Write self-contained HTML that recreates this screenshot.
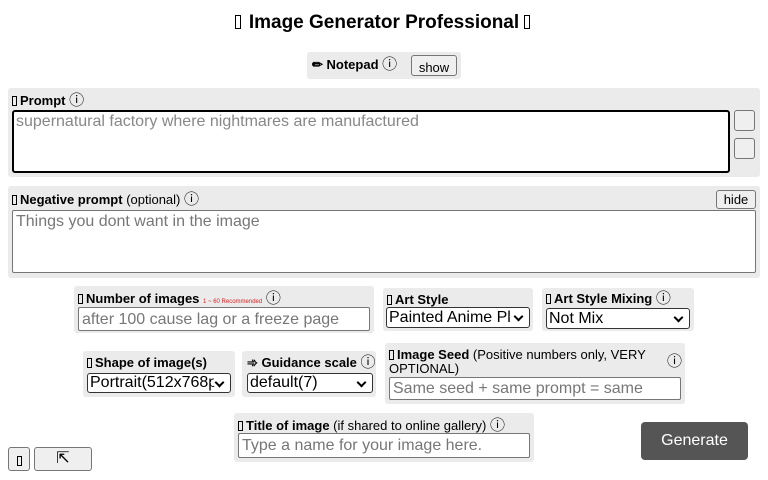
<!DOCTYPE html>
<html><head><meta charset="utf-8"><style>
*{box-sizing:border-box}
body{margin:0;width:768px;height:480px;background:#fff;font-family:"Liberation Sans",sans-serif;font-size:13px;color:#000;position:relative;overflow:hidden}
.a{position:absolute}
.box{position:absolute;background:#ebebeb;border-radius:3px}
.t{display:inline-block;width:5px;height:10px;border:1px solid #000;margin-right:3px;vertical-align:-1px}
.i{font-weight:normal;font-size:15px;font-family:"DejaVu Sans",sans-serif;line-height:10px}
.lbl{position:absolute;font-weight:bold;font-size:13px;white-space:nowrap;line-height:15px}
.lbl span.n{font-weight:normal}
.in{position:absolute;background:#fff;border:1px solid #767676;border-radius:2px;font-size:16px;color:#777;padding:2px 3px;white-space:nowrap;overflow:hidden;line-height:19px}
.sel{position:absolute;background:#fff;border:1px solid #333;border-radius:3px;font-size:16px;color:#000;padding:1px 2px;white-space:nowrap;overflow:hidden;line-height:18px}
.sel:after{content:"";position:absolute;right:7px;top:5px;width:5px;height:5px;border-right:2px solid #000;border-bottom:2px solid #000;transform:rotate(45deg);background:#fff;box-shadow:0 0 0 3px #fff}
.btn{position:absolute;background:#efefef;border:1px solid #767676;border-radius:3px;font-size:13px;text-align:center}
</style></head><body>
<div class="a" style="left:0;width:768px;top:12px;text-align:center;font-size:19px;font-weight:bold"><span class="t" style="width:6px;height:14px"></span> Image Generator Professional <span class="t" style="width:6px;height:14px"></span></div>

<div class="box" style="left:307px;top:52px;width:154px;height:27px"></div>
<div class="lbl" style="left:312px;top:57px">✏ Notepad <span class="i">ⓘ</span></div>
<div class="btn" style="left:411px;top:55px;width:46px;height:21px;line-height:21px;padding-top:1px">show</div>

<div class="box" style="left:8px;top:88px;width:752px;height:89px"></div>
<div class="lbl" style="left:12px;top:93px"><span class="t"></span>Prompt <span class="i">ⓘ</span></div>
<div class="in" style="left:12px;top:110px;width:718px;height:63px;border:2px solid #000;border-radius:3px;color:#888;padding:0 2px">supernatural factory where nightmares are manufactured</div>
<div class="btn" style="left:734px;top:110px;width:21px;height:21px"></div>
<div class="btn" style="left:734px;top:138px;width:21px;height:21px"></div>

<div class="box" style="left:8px;top:186px;width:752px;height:92px"></div>
<div class="lbl" style="left:12px;top:192px"><span class="t"></span>Negative prompt <span class="n">(optional)</span> <span class="i">ⓘ</span></div>
<div class="btn" style="left:716px;top:190px;width:40px;height:19px;line-height:17px">hide</div>
<div class="in" style="left:12px;top:210px;width:744px;height:63px;padding:1px 3px">Things you dont want in the image</div>

<div class="box" style="left:74px;top:286px;width:300px;height:47px"></div>
<div class="lbl" style="left:78px;top:291px"><span class="t"></span>Number of images <span class="n" style="color:#d22;font-size:6px">1 ~ 60 Recommended</span> <span class="i">ⓘ</span></div>
<div class="in" style="left:78px;top:307px;width:292px;height:24px">after 100 cause lag or a freeze page</div>

<div class="box" style="left:383px;top:288px;width:150px;height:43px"></div>
<div class="lbl" style="left:387px;top:292px"><span class="t"></span>Art Style</div>
<div class="sel" style="left:386px;top:307px;width:144px;height:21px">Painted Anime Pl</div>

<div class="box" style="left:542px;top:288px;width:152px;height:43px"></div>
<div class="lbl" style="left:546px;top:291px"><span class="t"></span>Art Style Mixing <span class="i">ⓘ</span></div>
<div class="sel" style="left:546px;top:308px;width:144px;height:21px">Not Mix</div>

<div class="box" style="left:83px;top:351px;width:152px;height:46px"></div>
<div class="lbl" style="left:87px;top:355px"><span class="t"></span>Shape of image(s)</div>
<div class="sel" style="left:87px;top:373px;width:144px;height:20px;padding-top:0">Portrait(512x768p</div>

<div class="box" style="left:242px;top:351px;width:134px;height:46px"></div>
<div class="lbl" style="left:247px;top:355px">➾ Guidance scale <span class="i">ⓘ</span></div>
<div class="sel" style="left:247px;top:373px;width:126px;height:20px;padding-top:0">default(7)</div>

<div class="box" style="left:385px;top:343px;width:300px;height:61px"></div>
<div class="lbl" style="left:389px;top:348px;width:260px;white-space:normal;line-height:14px"><span class="t"></span>Image Seed <span class="n">(Positive numbers only, VERY OPTIONAL)</span></div>
<div class="a i" style="left:667px;top:356px">ⓘ</div>
<div class="in" style="left:389px;top:377px;width:292px;height:23px;padding-top:1px">Same seed + same prompt = same</div>

<div class="box" style="left:234px;top:413px;width:300px;height:49px"></div>
<div class="lbl" style="left:238px;top:418px"><span class="t"></span>Title of image <span class="n">(if shared to online gallery)</span> <span class="i">ⓘ</span></div>
<div class="in" style="left:238px;top:433px;width:292px;height:25px">Type a name for your image here.</div>

<div class="a" style="left:641px;top:422px;width:107px;height:38px;background:#555;border-radius:4px;color:#fff;font-size:16px;text-align:center;line-height:38px">Generate</div>

<div class="btn" style="left:8px;top:447px;width:22px;height:24px;padding-top:5px"><span class="t" style="margin:0"></span></div>
<div class="btn" style="left:34px;top:447px;width:58px;height:24px;font-size:16px;line-height:22px">⇱</div>
</body></html>
